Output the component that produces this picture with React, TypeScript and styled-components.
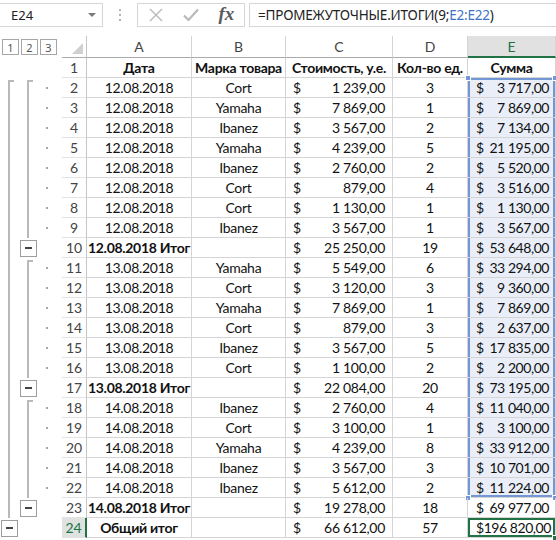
import React from 'react';
import styled, { createGlobalStyle, css } from 'styled-components';

const GlobalStyle = createGlobalStyle`
  html, body {
    margin: 0;
    padding: 0;
    background: #fff;
  }
  body {
    font-family: 'Lato', 'Noto Sans', sans-serif;
    overflow: hidden;
  }
  * { box-sizing: border-box; }
`;

const GRID = '62px 25px 105px 94px 107px 75px 88px';
const LINE = '#b9b9b9';
const GRIDLINE = '#d4d4d4';
const GREEN = '#217346';
const BLUE = '#7396d4';

// ---------- formula bar ----------

const Page = styled.div`
  width: 556px;
  height: 540px;
  overflow: hidden;
`;

const FormulaBar = styled.div`
  display: flex;
  align-items: flex-start;
  height: 36px;
  padding-top: 3px;
`;

const NameBox = styled.div`
  width: 103px;
  height: 24px;
  border: 1px solid #d6d6d6;
  border-left: none;
  display: flex;
  align-items: center;
  justify-content: space-between;
  padding: 0 6px 0 11px;
  font-family: 'Noto Sans', sans-serif;
  font-size: 13px;
  color: #222;
`;

const DropArrow = styled.span`
  width: 0;
  height: 0;
  border-left: 4px solid transparent;
  border-right: 4px solid transparent;
  border-top: 4px solid #7a7a7a;
`;

const Grip = styled.div`
  width: 34px;
  height: 24px;
  display: flex;
  flex-direction: column;
  align-items: center;
  justify-content: center;
  gap: 3px;

  span {
    width: 2px;
    height: 2px;
    background: #b3b3b3;
  }
`;

const FxGroup = styled.div`
  width: 108px;
  height: 24px;
  border: 1px solid #d6d6d6;
  display: grid;
  grid-template-columns: 1fr 1fr 1fr;
  align-items: center;
  justify-items: center;
`;

const Fx = styled.span`
  font-family: 'Liberation Serif', serif;
  font-style: italic;
  font-weight: 700;
  font-size: 19px;
  color: #5b5b5b;
  margin-top: -2px;
`;

const FormulaInput = styled.div`
  flex: 1;
  margin-left: 4px;
  height: 24px;
  border: 1px solid #d6d6d6;
  border-right: none;
  display: flex;
  align-items: center;
  padding-left: 8px;
  font-family: 'Noto Sans', sans-serif;
  font-size: 13.5px;
  letter-spacing: -0.2px;
  color: #222;
  white-space: nowrap;
`;

const Ref = styled.span`
  color: #3f73c9;
`;

// ---------- sheet ----------

const Row = styled.div<{ $head?: boolean }>`
  display: grid;
  grid-template-columns: ${GRID};
  height: ${p => (p.$head ? 22 : 20)}px;
`;

const Outline = styled.div`
  display: grid;
  grid-template-columns: 19px 19px 24px;
  height: 100%;
`;

const Lane = styled.div`
  display: flex;
  align-items: center;
  height: 100%;
`;

const VLine = styled.div`
  width: 2px;
  height: 100%;
  margin-left: 8px;
  background: ${LINE};
`;

const Bracket = styled.div`
  align-self: flex-end;
  width: 6px;
  height: calc(100% - 2px);
  margin-left: 8px;
  border-left: 2px solid ${LINE};
  border-top: 2px solid ${LINE};
`;

const Toggle = styled.div`
  width: 17px;
  height: 17px;
  margin-left: 1px;
  border: 1px solid #9d9d9d;
  background: #fff;
  display: flex;
  align-items: center;
  justify-content: center;

  &::after {
    content: '';
    width: 7px;
    height: 2px;
    background: #444;
  }
`;

const Dot = styled.div`
  width: 2px;
  height: 2px;
  margin-left: 8px;
  background: #a8a8a8;
`;

const Levels = styled.div`
  display: flex;
  align-items: center;
  gap: 2px;
  padding-left: 2px;
`;

const LevelBtn = styled.div`
  width: 17px;
  height: 16px;
  border: 1px solid #a6a6a6;
  display: flex;
  align-items: center;
  justify-content: center;
  font-family: 'Noto Sans', sans-serif;
  font-size: 11px;
  color: #555;
`;

const Corner = styled.div`
  display: flex;
  align-items: flex-end;
  justify-content: flex-end;
  padding: 0 3px 3px 0;
  border-right: 1px solid #c6c6c6;
  border-bottom: 1px solid #ababab;

  &::after {
    content: '';
    width: 0;
    height: 0;
    border-left: 11px solid transparent;
    border-bottom: 11px solid #d0d0d0;
  }
`;

const ColHead = styled.div<{ $on?: boolean }>`
  display: flex;
  align-items: center;
  justify-content: center;
  border-right: 1px solid ${GRIDLINE};
  border-bottom: 1px solid #ababab;
  font-size: 14px;
  color: #444;
  ${p =>
    p.$on &&
    css`
      background: #e1e1e1;
      color: ${GREEN};
      border-bottom: 2px solid ${GREEN};
    `}
`;

const RowHead = styled.div<{ $on?: boolean }>`
  display: flex;
  align-items: center;
  justify-content: center;
  border-right: 1px solid #c6c6c6;
  border-bottom: 1px solid #e3e3e3;
  font-size: 14px;
  color: #444;
  ${p =>
    p.$on &&
    css`
      background: #dfe3e0;
      color: ${GREEN};
      border-right: 2px solid ${GREEN};
    `}
`;

type Sel = 'top' | 'mid' | 'bottom';

const Cell = styled.div<{
  $align?: 'left' | 'center' | 'right';
  $bold?: boolean;
  $money?: 'C' | 'E';
  $sel?: Sel;
  $active?: boolean;
}>`
  position: relative;
  display: flex;
  align-items: center;
  justify-content: ${p =>
    p.$money ? 'space-between' : p.$align === 'left' ? 'flex-start' : p.$align === 'right' ? 'flex-end' : 'center'};
  padding: ${p => (p.$money === 'C' ? '0 7px 0 7px' : p.$money === 'E' ? '0 6px 0 8px' : '0 3px')};
  border-right: 1px solid ${GRIDLINE};
  border-bottom: 1px solid ${GRIDLINE};
  font-size: 14px;
  letter-spacing: ${p => (p.$money === 'E' ? '-0.45px' : '-0.3px')};
  font-weight: ${p => (p.$bold ? 700 : 400)};
  color: #111;
  white-space: nowrap;
  ${p =>
    p.$sel &&
    css`
      background: #e9eef8;
      box-shadow: inset 2px 0 0 ${BLUE}, inset -2px 0 0 ${BLUE}
        ${p.$sel === 'top' ? `, inset 0 2px 0 ${BLUE}` : ''}
        ${p.$sel === 'bottom' ? `, inset 0 -2px 0 ${BLUE}` : ''};
    `}
  ${p =>
    p.$active &&
    css`
      box-shadow: inset 0 0 0 2px ${GREEN};
    `}
`;

const Handle = styled.span<{ $at: 'tl' | 'tr' | 'bl' | 'br'; $green?: boolean }>`
  position: absolute;
  width: 6px;
  height: 6px;
  background: ${p => (p.$green ? GREEN : BLUE)};
  border: 1px solid #fff;
  ${p => (p.$at[0] === 't' ? 'top: -3px;' : 'bottom: -4px;')}
  ${p => (p.$at[1] === 'l' ? 'left: -3px;' : 'right: -3px;')}
`;

// ---------- data ----------

type Line = { a: string; b: string; c: string; d: string; e: string; total?: boolean };

const data: Line[] = [
  { a: '12.08.2018', b: 'Cort', c: '1 239,00', d: '3', e: '3 717,00' },
  { a: '12.08.2018', b: 'Yamaha', c: '7 869,00', d: '1', e: '7 869,00' },
  { a: '12.08.2018', b: 'Ibanez', c: '3 567,00', d: '2', e: '7 134,00' },
  { a: '12.08.2018', b: 'Yamaha', c: '4 239,00', d: '5', e: '21 195,00' },
  { a: '12.08.2018', b: 'Ibanez', c: '2 760,00', d: '2', e: '5 520,00' },
  { a: '12.08.2018', b: 'Cort', c: '879,00', d: '4', e: '3 516,00' },
  { a: '12.08.2018', b: 'Cort', c: '1 130,00', d: '1', e: '1 130,00' },
  { a: '12.08.2018', b: 'Ibanez', c: '3 567,00', d: '1', e: '3 567,00' },
  { a: '12.08.2018 Итог', b: '', c: '25 250,00', d: '19', e: '53 648,00', total: true },
  { a: '13.08.2018', b: 'Yamaha', c: '5 549,00', d: '6', e: '33 294,00' },
  { a: '13.08.2018', b: 'Cort', c: '3 120,00', d: '3', e: '9 360,00' },
  { a: '13.08.2018', b: 'Yamaha', c: '7 869,00', d: '1', e: '7 869,00' },
  { a: '13.08.2018', b: 'Cort', c: '879,00', d: '3', e: '2 637,00' },
  { a: '13.08.2018', b: 'Ibanez', c: '3 567,00', d: '5', e: '17 835,00' },
  { a: '13.08.2018', b: 'Cort', c: '1 100,00', d: '2', e: '2 200,00' },
  { a: '13.08.2018 Итог', b: '', c: '22 084,00', d: '20', e: '73 195,00', total: true },
  { a: '14.08.2018', b: 'Ibanez', c: '2 760,00', d: '4', e: '11 040,00' },
  { a: '14.08.2018', b: 'Cort', c: '3 100,00', d: '1', e: '3 100,00' },
  { a: '14.08.2018', b: 'Yamaha', c: '4 239,00', d: '8', e: '33 912,00' },
  { a: '14.08.2018', b: 'Ibanez', c: '3 567,00', d: '3', e: '10 701,00' },
  { a: '14.08.2018', b: 'Ibanez', c: '5 612,00', d: '2', e: '11 224,00' },
  { a: '14.08.2018 Итог', b: '', c: '19 278,00', d: '18', e: '69 977,00', total: true },
  { a: 'Общий итог', b: '', c: '66 612,00', d: '57', e: '196 820,00', total: true },
];

const groups = [
  [2, 10],
  [11, 17],
  [18, 23],
];

type Mark = 'start' | 'line' | 'button' | 'dot' | null;

const level1 = (r: number): Mark => (r === 2 ? 'start' : r < 24 ? 'line' : 'button');

const level2 = (r: number): Mark => {
  for (const [s, b] of groups) {
    if (r === s) return 'start';
    if (r > s && r < b) return 'line';
    if (r === b) return 'button';
  }
  return null;
};

const level3 = (total?: boolean): Mark => (total ? null : 'dot');

const renderMark = (m: Mark) => {
  if (m === 'start') return <Bracket />;
  if (m === 'line') return <VLine />;
  if (m === 'button') return <Toggle />;
  if (m === 'dot') return <Dot />;
  return null;
};

const XIcon = () => (
  <svg width="16" height="16" viewBox="0 0 16 16">
    <path d="M2 2 L14 14 M14 2 L2 14" stroke="#b9b9b9" strokeWidth="1.4" fill="none" />
  </svg>
);

const CheckIcon = () => (
  <svg width="18" height="16" viewBox="0 0 18 16">
    <path d="M2 8.5 L6.5 13 L16 2.5" stroke="#b9b9b9" strokeWidth="2.2" fill="none" strokeLinejoin="round" />
  </svg>
);

const Money: React.FC<{ v: string }> = ({ v }) => (
  <>
    <span>$</span>
    <span>{v}</span>
  </>
);

const App: React.FC = () => {
  return (
    <Page>
      <GlobalStyle />
      <FormulaBar>
        <NameBox>
          E24
          <DropArrow />
        </NameBox>
        <Grip>
          <span />
          <span />
          <span />
        </Grip>
        <FxGroup>
          <XIcon />
          <CheckIcon />
          <Fx>fx</Fx>
        </FxGroup>
        <FormulaInput>
          =ПРОМЕЖУТОЧНЫЕ.ИТОГИ(9;<Ref>E2:E22</Ref>)
        </FormulaInput>
      </FormulaBar>

      <Row $head>
        <Levels>
          <LevelBtn>1</LevelBtn>
          <LevelBtn>2</LevelBtn>
          <LevelBtn>3</LevelBtn>
        </Levels>
        <Corner />
        <ColHead>A</ColHead>
        <ColHead>B</ColHead>
        <ColHead>C</ColHead>
        <ColHead>D</ColHead>
        <ColHead $on>E</ColHead>
      </Row>

      <Row>
        <Outline />
        <RowHead>1</RowHead>
        <Cell $bold>Дата</Cell>
        <Cell $bold>Марка товара</Cell>
        <Cell $bold>Стоимость, у.е.</Cell>
        <Cell $bold>Кол-во ед.</Cell>
        <Cell $bold>Сумма</Cell>
      </Row>

      {data.map((d, i) => {
        const r = i + 2;
        const sel: Sel | undefined = r === 2 ? 'top' : r === 22 ? 'bottom' : r < 22 ? 'mid' : undefined;
        const active = r === 24;
        return (
          <Row key={r}>
            <Outline>
              <Lane>{renderMark(level1(r))}</Lane>
              <Lane>{renderMark(level2(r))}</Lane>
              <Lane>{renderMark(level3(d.total))}</Lane>
            </Outline>
            <RowHead $on={active}>{r}</RowHead>
            <Cell $bold={d.total}>{d.a}</Cell>
            <Cell>{d.b}</Cell>
            <Cell $money="C">
              <Money v={d.c} />
            </Cell>
            <Cell>{d.d}</Cell>
            <Cell $money="E" $sel={sel} $active={active}>
              {active ? <span>${d.e}</span> : <Money v={d.e} />}
              {r === 2 && (
                <>
                  <Handle $at="tl" />
                  <Handle $at="tr" />
                </>
              )}
              {r === 22 && (
                <>
                  <Handle $at="bl" />
                  <Handle $at="br" />
                </>
              )}
              {active && <Handle $at="br" $green />}
            </Cell>
          </Row>
        );
      })}
    </Page>
  );
};

export default App;
